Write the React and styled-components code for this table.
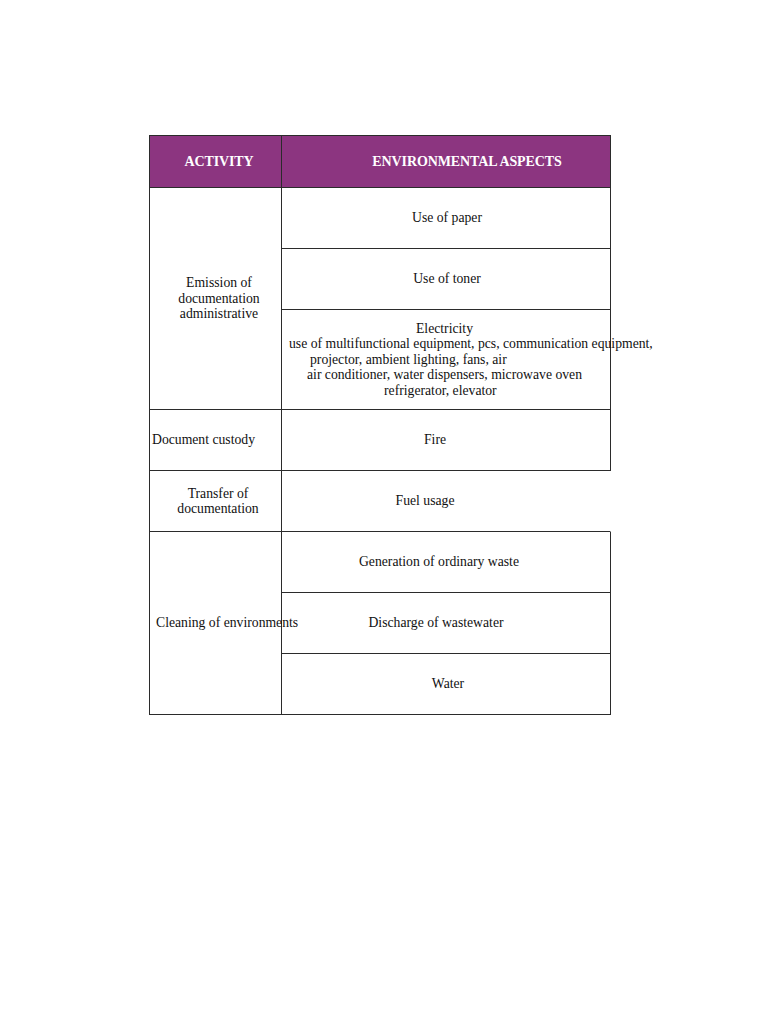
import React from "react";
import styled, { createGlobalStyle } from "styled-components";

const Global = createGlobalStyle`
  html, body { margin: 0; padding: 0; background: #fff; }
  body { font-family: "Liberation Serif", "Times New Roman", serif; color: #111; }
`;

const Page = styled.div`
  width: 768px;
  min-height: 1024px;
  box-sizing: border-box;
  padding: 135px 0 0 149px;
`;

const Table = styled.div`
  display: grid;
  grid-template-columns: 133px 329px;
  grid-template-rows: 53px 61px 61px 100px 61px 61px 61px 61px 61px;
  width: 462px;
  box-sizing: border-box;
`;

const Cell = styled.div`
  box-sizing: border-box;
  grid-column: ${(p) => p.col};
  grid-row: ${(p) => p.row};
  border-right: ${(p) => (p.noRight ? "1px solid transparent" : "1px solid #2b2b2b")};
  border-bottom: 1px solid #2b2b2b;
  border-left: ${(p) => (p.col === 1 ? "1px solid #2b2b2b" : "none")};
  border-top: ${(p) => (p.top ? "1px solid #2b2b2b" : "none")};
  display: flex;
  flex-direction: column;
  justify-content: center;
  align-items: ${(p) => (p.left ? "flex-start" : "center")};
  text-align: ${(p) => (p.left ? "left" : "center")};
  padding-left: ${(p) => p.pl || 0}px;
  padding-right: ${(p) => p.pr || 0}px;
  font-size: 13.7px;
  line-height: 15.5px;
  white-space: nowrap;
  overflow: visible;
  position: relative;
`;

const HeadCell = styled(Cell)`
  background: #8c3580;
  color: #fff;
  font-weight: bold;
  font-size: 14px;
  letter-spacing: -0.1px;
`;

const Line = styled.span`
  display: block;
  padding-left: ${(p) => p.indent || 0}px;
`;

const ElecCell = styled(Cell)`
  align-items: stretch;
  text-align: left;
`;

export default function App() {
  return (
    <>
      <Global />
      <Page>
        <Table>
          <HeadCell col={1} row={1} top pl={7}>ACTIVITY</HeadCell>
          <HeadCell col={2} row={1} top pl={42}>ENVIRONMENTAL ASPECTS</HeadCell>

          <Cell col={1} row="2 / span 3" pl={7}>
            <span>Emission of</span>
            <span>documentation</span>
            <span>administrative</span>
          </Cell>
          <Cell col={2} row={2} pl={2}>Use of paper</Cell>
          <Cell col={2} row={3} pl={2}>Use of toner</Cell>
          <ElecCell col={2} row={4}>
            <Line indent={134}>Electricity</Line>
            <Line indent={7}>use of multifunctional equipment, pcs, communication equipment,</Line>
            <Line indent={28}>projector, ambient lighting, fans, air</Line>
            <Line indent={25}>air conditioner, water dispensers, microwave oven</Line>
            <Line indent={102}>refrigerator, elevator</Line>
          </ElecCell>

          <Cell col={1} row={5} left pl={2}>Document custody</Cell>
          <Cell col={2} row={5} pr={22}>Fire</Cell>

          <Cell col={1} row={6} pl={5}>
            <span>Transfer of</span>
            <span>documentation</span>
          </Cell>
          <Cell col={2} row={6} noRight pr={42}>Fuel usage</Cell>

          <Cell col={1} row="7 / span 3" left pl={6}>Cleaning of environments</Cell>
          <Cell col={2} row={7} pr={14}>Generation of ordinary waste</Cell>
          <Cell col={2} row={8} pr={20}>Discharge of wastewater</Cell>
          <Cell col={2} row={9} pl={4}>Water</Cell>
        </Table>
      </Page>
    </>
  );
}
